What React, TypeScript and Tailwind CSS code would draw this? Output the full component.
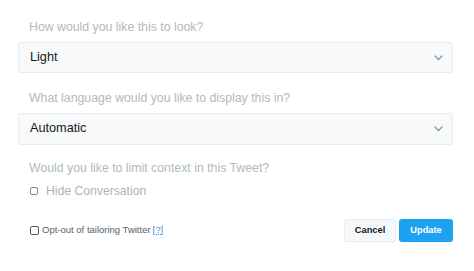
import React from "react";

function Chevron() {
  return (
    <svg width="9" height="6" viewBox="0 0 9 6" className="shrink-0">
      <path d="M1 1 L4.5 4.5 L8 1" fill="none" stroke="#8899a6" strokeWidth="1.4" strokeLinecap="round" strokeLinejoin="round" />
    </svg>
  );
}

function Select({ value, h }: { value: string; h: string }) {
  return (
    <div className={`flex items-center justify-between rounded-[3px] border border-[#e6ecf0] bg-[#f7f9fa] pl-[11px] pr-[9px] ${h}`}>
      <span className="text-[12.7px] text-[#14171a]">{value}</span>
      <Chevron />
    </div>
  );
}

export default function App() {
  return (
    <div
      className="flex h-[271px] w-[474px] flex-col bg-white pl-[18px] pr-[21px] pt-[18px]"
      style={{ fontFamily: '"Liberation Sans", Arial, sans-serif' }}
    >
      <div className="pl-[11px] text-[12.3px] leading-[18px] text-[#b0bac2]">How would you like this to look?</div>
      <div className="mt-[6px]">
        <Select value="Light" h="h-[31px]" />
      </div>
      <div className="mt-[16px] pl-[11px] text-[12.3px] leading-[18px] text-[#b0bac2]">
        What language would you like to display this in?
      </div>
      <div className="mt-[6px]">
        <Select value="Automatic" h="h-[32px]" />
      </div>
      <div className="mt-[14px] pl-[11px] text-[12.3px] leading-[18px] text-[#b0bac2]">
        Would you like to limit context in this Tweet?
      </div>
      <div className="mt-[5px] flex h-[18px] items-center pl-[12px]">
        <span className="h-[8px] w-[8px] rounded-[2px] border border-[#7d8a94]" />
        <span className="ml-[8px] text-[12.2px] text-[#aab4bc]">Hide Conversation</span>
      </div>
      <div className="mt-[19px] flex items-center justify-between">
        <div className="flex items-center pl-[12px]">
          <span className="h-[9px] w-[9px] rounded-[2px] border border-[#4f5b64]" />
          <span className="ml-[3px] text-[9.5px] text-[#56636d]">Opt-out of tailoring Twitter</span>
          <span className="ml-[2px] text-[9.5px] text-[#3b94d9] underline decoration-dotted">[?]</span>
        </div>
        <div className="flex items-center gap-[3px]">
          <button className="h-[23px] w-[52px] rounded-[3px] border border-[#e6ecf0] bg-[#f5f8fa] text-[9.3px] font-bold text-[#14171a]">
            Cancel
          </button>
          <button className="h-[23px] w-[54px] rounded-[3px] bg-[#1da1f2] text-[9.3px] font-bold text-white">
            Update
          </button>
        </div>
      </div>
    </div>
  );
}
